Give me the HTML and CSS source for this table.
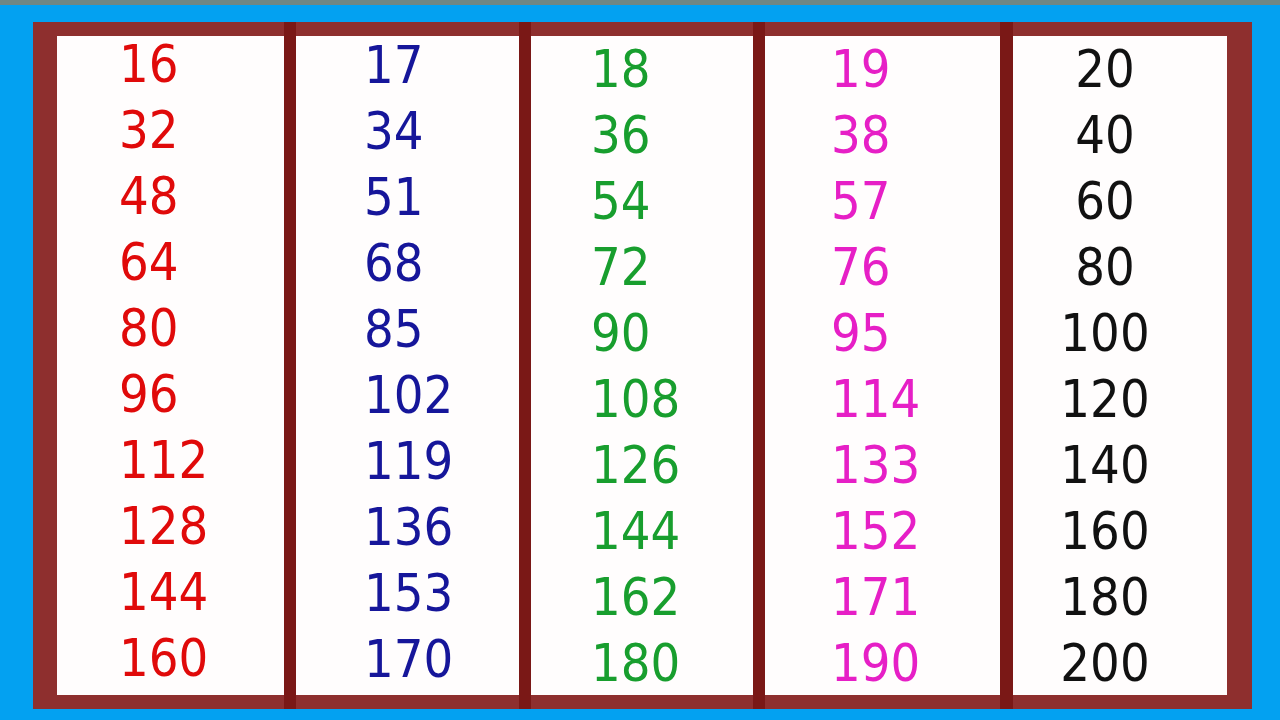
FILE: index.html
```html
<!DOCTYPE html>
<html>
<head>
<meta charset="utf-8">
<link rel="stylesheet" href="styles.css">
</head>
<body>
<div class="topbar"></div>
<div class="frame">
  <div class="col c1">
    <div class="n">16</div><div class="n">32</div><div class="n">48</div><div class="n">64</div><div class="n">80</div>
    <div class="n">96</div><div class="n">112</div><div class="n">128</div><div class="n">144</div><div class="n">160</div>
  </div>
  <div class="div"></div>
  <div class="col c2">
    <div class="n">17</div><div class="n">34</div><div class="n">51</div><div class="n">68</div><div class="n">85</div>
    <div class="n">102</div><div class="n">119</div><div class="n">136</div><div class="n">153</div><div class="n">170</div>
  </div>
  <div class="div"></div>
  <div class="col c3">
    <div class="n">18</div><div class="n">36</div><div class="n">54</div><div class="n">72</div><div class="n">90</div>
    <div class="n">108</div><div class="n">126</div><div class="n">144</div><div class="n">162</div><div class="n">180</div>
  </div>
  <div class="div"></div>
  <div class="col c4">
    <div class="n">19</div><div class="n">38</div><div class="n">57</div><div class="n">76</div><div class="n">95</div>
    <div class="n">114</div><div class="n">133</div><div class="n">152</div><div class="n">171</div><div class="n">190</div>
  </div>
  <div class="div div-last"></div>
  <div class="col c5">
    <div class="n">20</div><div class="n">40</div><div class="n">60</div><div class="n">80</div><div class="n">100</div>
    <div class="n">120</div><div class="n">140</div><div class="n">160</div><div class="n">180</div><div class="n">200</div>
  </div>
</div>
</body>
</html>
```

FILE: styles.css
```css
html, body {
  margin: 0;
  padding: 0;
}
body {
  width: 1280px;
  height: 720px;
  overflow: hidden;
  background: #03a1f1;
  font-family: "DejaVu Sans Condensed", "DejaVu Sans", sans-serif;
}
.topbar {
  height: 5px;
  background: #6f8784;
}
.frame {
  margin: 17px 0 0 33px;
  width: 1219px;
  height: 687px;
  box-sizing: border-box;
  padding: 0 25px 0 24px;
  background: #8e2f2e;
  display: flex;
}
.col {
  margin: 14px 0;
  background: #fffdfd;
  display: flex;
  flex-direction: column;
  font-size: 52px;
  box-sizing: border-box;
}
.n {
  height: 66px;
  line-height: 66px;
}
.div {
  width: 12px;
  background: #7a1816;
}
.div-last {
  width: 13px;
}
.c1 {
  width: 227px;
  padding-left: 62px;
  color: #e00a0a;
}
.c1 .n:first-child { margin-top: -5px; }
.c2 {
  width: 223px;
  padding-left: 68px;
  color: #16169a;
}
.c2 .n:first-child { margin-top: -4px; }
.c3 {
  width: 222px;
  padding-left: 60px;
  color: #189e2e;
}
.c4 {
  width: 235px;
  padding-left: 66px;
  color: #e61fc6;
}
.c5 {
  width: 214px;
  padding-right: 30px;
  text-align: center;
  color: #111111;
}
```
